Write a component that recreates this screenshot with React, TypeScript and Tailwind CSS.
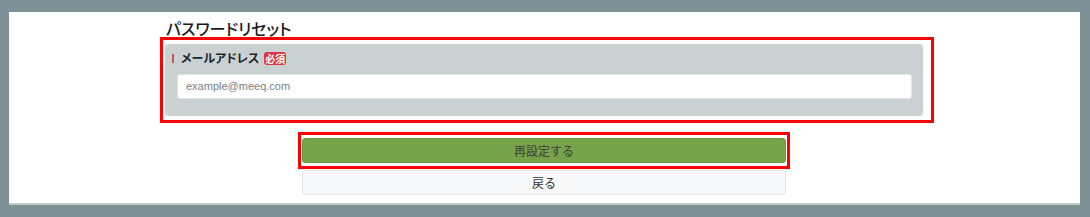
import React from "react";

const jp = "font-['Noto_Sans_CJK_JP','Noto_Sans',sans-serif]";

export default function App() {
  return (
    <div className="w-[1090px] h-[217px] bg-[#7e9196] pt-[12px] pl-[9px] pr-[10px] overflow-hidden">
      <div className={`h-[193px] bg-white border-b-2 border-[#c3cbcd] pl-[151px] ${jp}`}>
        <div className="flex flex-col items-start">
          <div className="pt-[6px] pl-[6px] h-[25px] text-[16px] leading-[20px] font-medium text-[#1a1a1a] [font-feature-settings:'palt']">
            パスワードリセット
          </div>
          <div className="w-[774px] border-[3px] border-[#ff0000] pt-[4px] pb-[4px] pl-[2px] pr-[8px]">
            <div className="w-[758px] h-[72px] bg-[#c9d1d3] rounded-[4px] pl-[12px] pr-[11px] pt-[6px]">
              <div className="flex items-center h-[16px]">
                <div className="ml-[-5px] w-[2px] h-[9px] bg-[#d9534f]" />
                <span className="ml-[7px] text-[12px] font-bold text-[#212529] leading-[16px] [font-feature-settings:'palt']">
                  メールアドレス
                </span>
                <span className="ml-[5px] bg-[#dc3545] text-white text-[10px] font-bold leading-[13px] px-[1px] rounded-[3px]">
                  必須
                </span>
              </div>
              <div className="mt-[8px] h-[25px] bg-white rounded-[3px] border border-[#e2e6e8] flex items-center pl-[8px]">
                <span className="text-[11px] text-[#7a8087] font-['Liberation_Sans',Arial,sans-serif]">
                  example@meeq.com
                </span>
              </div>
            </div>
          </div>
          <div className="ml-[138px] mt-[9px] w-[492px] border-[3px] border-[#ff0000] px-[1px] py-[3px]">
            <div className="h-[25px] bg-[#76a34a] rounded-[3px] border border-[#6e9a44] flex items-center justify-center text-[12px] text-[#3a3f3a]">
              再設定する
            </div>
          </div>
          <div className="ml-[142px] mt-[1px] w-[484px] h-[25px] bg-[#f7f8fa] border border-[#e3e6ea] rounded-[3px] flex items-center justify-center text-[12px] text-[#333]">
            戻る
          </div>
        </div>
      </div>
    </div>
  );
}
